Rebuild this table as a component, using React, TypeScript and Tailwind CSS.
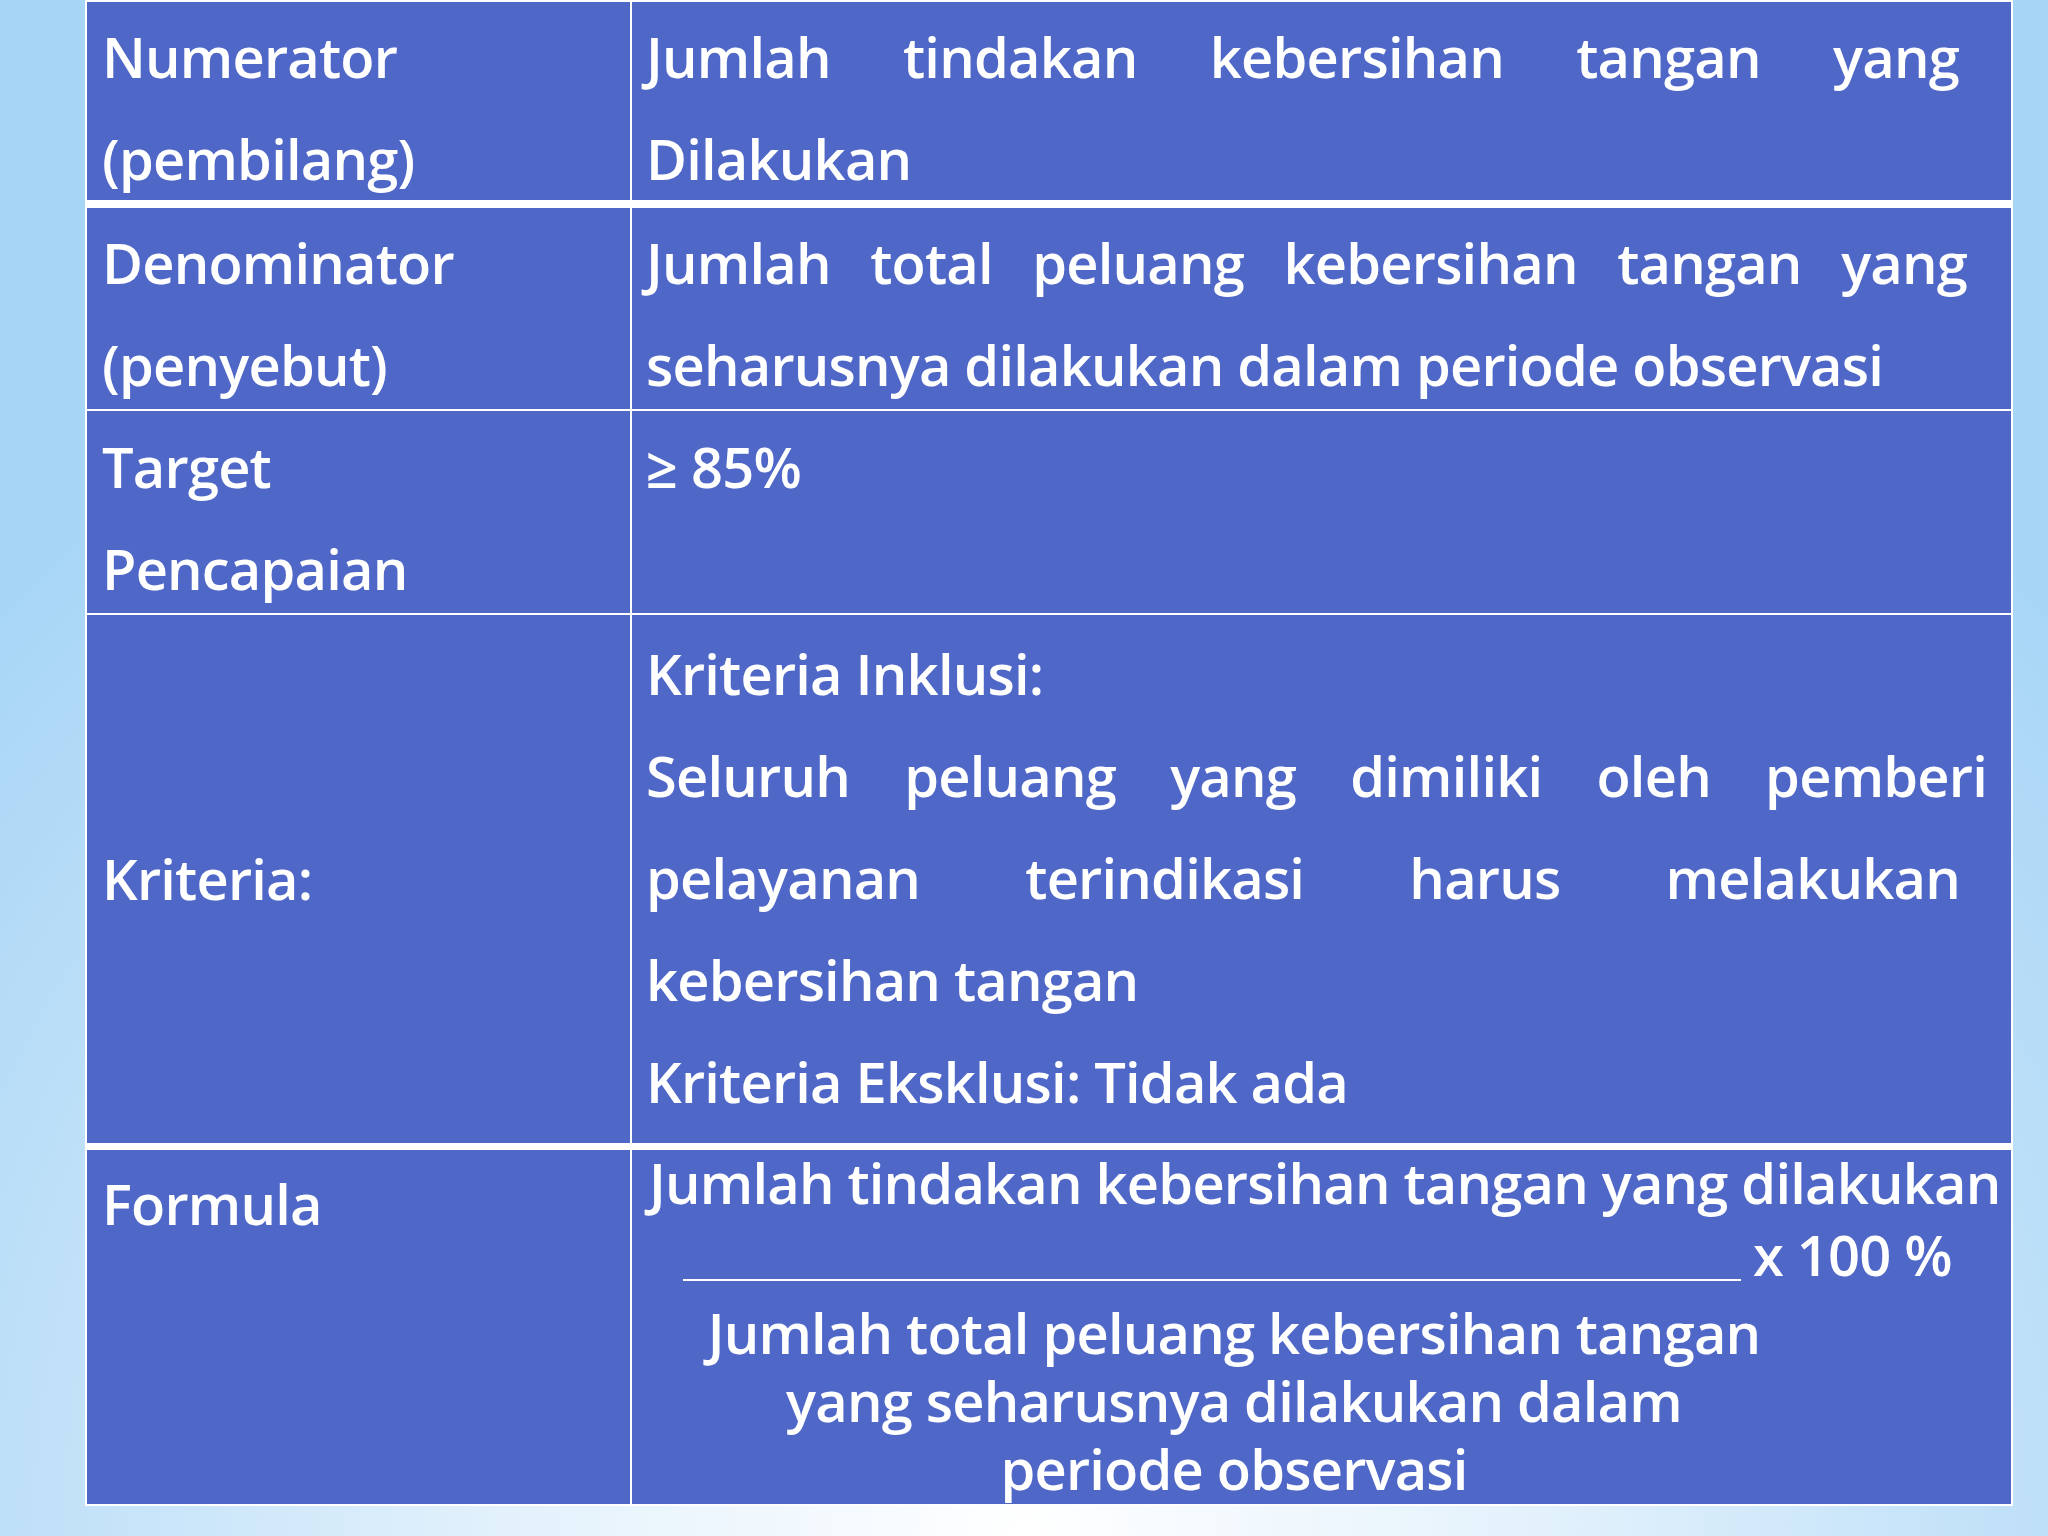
const cell = "bg-[#4f67c7] text-white";

const Justified = ({ w, children }: { w: string; children: React.ReactNode }) => (
  <div className={`${w} text-justify [text-align-last:justify]`}>{children}</div>
);

export default function App() {
  return (
    <div className="min-h-screen w-full bg-[radial-gradient(ellipse_70%_90%_at_50%_100%,#ffffff_0%,#e4f2fc_35%,#bfe0f8_70%,#a6d5f6_100%)] pl-[85px] font-['Open_Sans',sans-serif] font-semibold">
      <div className="flex w-[1928px] flex-col gap-[2px] bg-white p-[2px] text-[56px] leading-[102px] tracking-[-0.8px]">
        {/* numerator */}
        <div className="grid grid-cols-[543px_1fr] grid-rows-[198px] gap-[2px]">
          <div className={`${cell} pl-[15px] pt-[3px]`}>
            <div>Numerator</div>
            <div>(pembilang)</div>
          </div>
          <div className={`${cell} pl-[14px] pt-[3px]`}>
            <Justified w="w-[1313px]">Jumlah tindakan kebersihan tangan yang</Justified>
            <div>Dilakukan</div>
          </div>
        </div>
        {/* denominator */}
        <div className="mt-[6px] grid grid-cols-[543px_1fr] grid-rows-[201px] gap-[2px]">
          <div className={`${cell} pl-[15px] pt-[3px]`}>
            <div>Denominator</div>
            <div>(penyebut)</div>
          </div>
          <div className={`${cell} pl-[14px] pt-[3px]`}>
            <Justified w="w-[1321px]">Jumlah total peluang kebersihan tangan yang</Justified>
            <div>seharusnya dilakukan dalam periode observasi</div>
          </div>
        </div>
        {/* target */}
        <div className="grid grid-cols-[543px_1fr] grid-rows-[202px] gap-[2px]">
          <div className={`${cell} pl-[15px] pt-[4px]`}>
            <div>Target</div>
            <div>Pencapaian</div>
          </div>
          <div className={`${cell} pl-[14px] pt-[4px]`}>
            <div>≥ 85%</div>
          </div>
        </div>
        {/* kriteria */}
        <div className="grid grid-cols-[543px_1fr] grid-rows-[528px] gap-[2px]">
          <div className={`${cell} flex items-center pl-[15px]`}>
            <div className="pb-[2px]">Kriteria:</div>
          </div>
          <div className={`${cell} pl-[14px] pt-[7px]`}>
            <div>Kriteria Inklusi:</div>
            <Justified w="w-[1341px]">Seluruh peluang yang dimiliki oleh pemberi</Justified>
            <Justified w="w-[1314px]">pelayanan terindikasi harus melakukan</Justified>
            <div>kebersihan tangan</div>
            <div>Kriteria Eksklusi: Tidak ada</div>
          </div>
        </div>
        {/* formula */}
        <div className="mt-[5px] grid grid-cols-[543px_1fr] grid-rows-[354px] gap-[2px]">
          <div className={`${cell} pl-[15px] pt-[2px]`}>
            <div>Formula</div>
          </div>
          <div className={`${cell} flex flex-col`}>
            <div className="pl-[17px] leading-[64px] whitespace-nowrap">
              Jumlah tindakan kebersihan tangan yang dilakukan
            </div>
            <div className="flex h-[84px] items-start">
              <div className="ml-[51px] mt-[65px] h-[2px] w-[1058px] bg-white" />
              <div className="ml-[12px] mt-[8px] leading-[64px] whitespace-nowrap">x 100 %</div>
            </div>
            <div className="w-[1204px] text-center leading-[68px]">
              <div>Jumlah total peluang kebersihan tangan</div>
              <div>yang seharusnya dilakukan dalam</div>
              <div>periode observasi</div>
            </div>
          </div>
        </div>
      </div>
    </div>
  );
}
